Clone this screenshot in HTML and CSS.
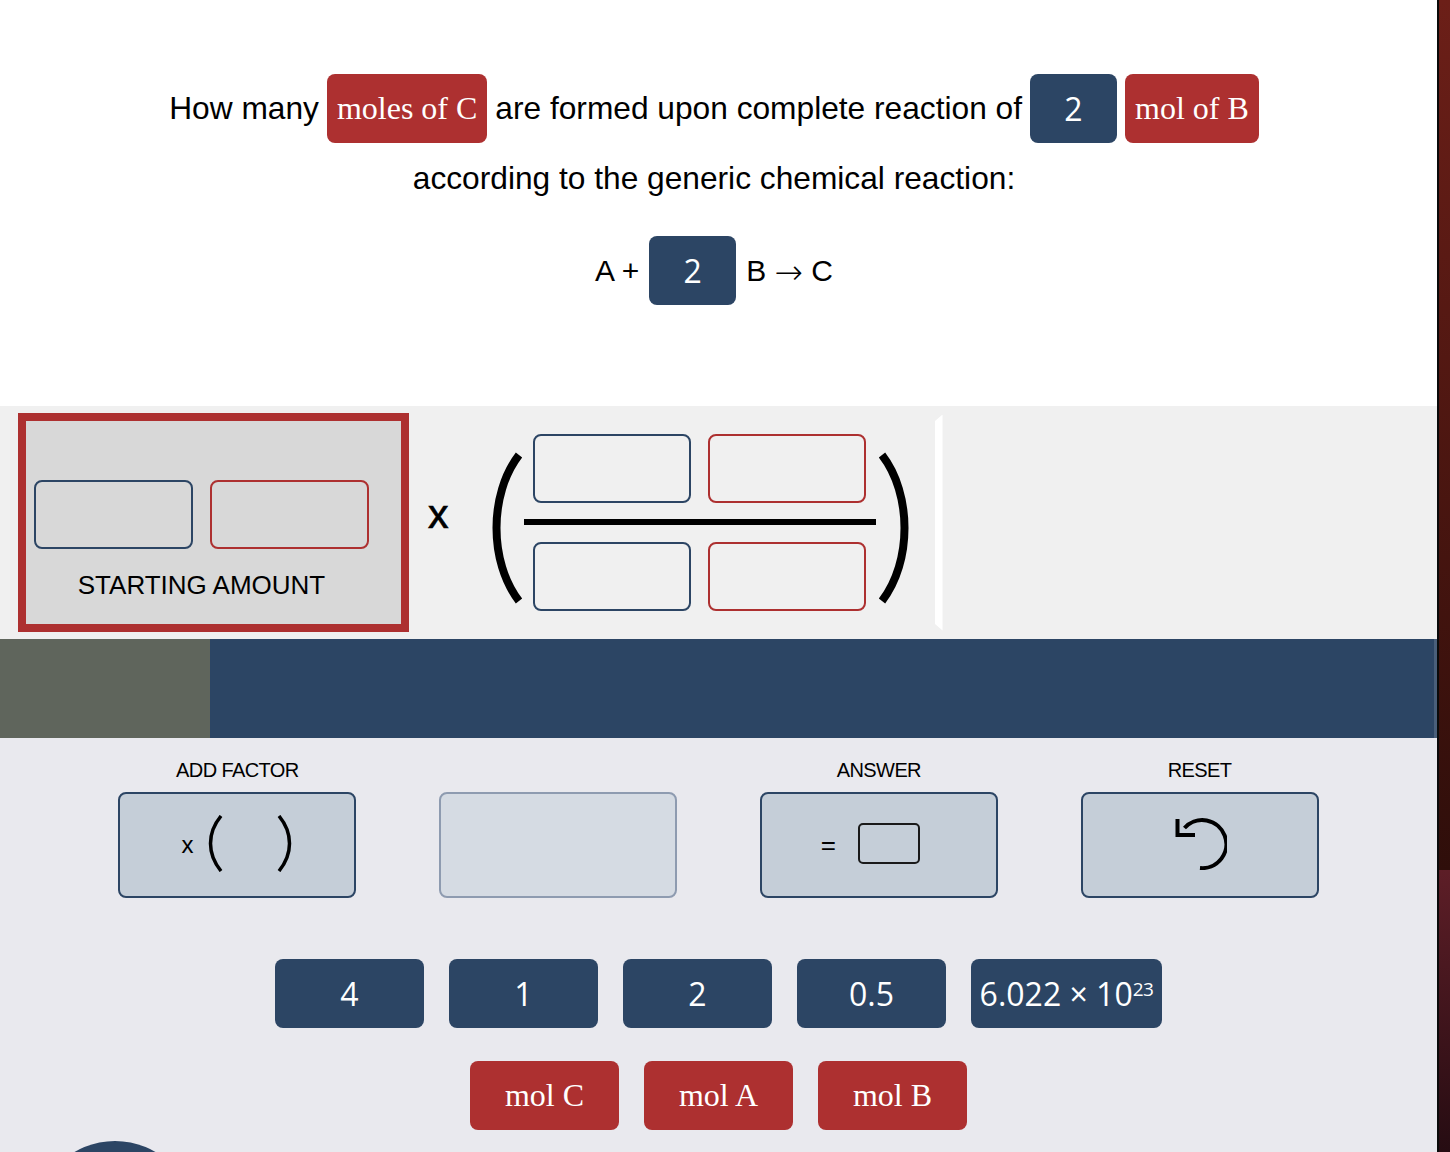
FILE: index.html
```html
<!DOCTYPE html>
<html>
<head>
<meta charset="utf-8">
<title>Dimensional analysis</title>
<link rel="stylesheet" href="styles.css">
</head>
<body>
<div class="page">
  <main class="app">
    <section class="question">
      <div class="q-line">
        <span>How many</span>
        <span class="chip chip-unit">moles of C</span>
        <span>are formed upon complete reaction of</span>
        <span class="chip chip-num">2</span>
        <span class="chip chip-unit">mol of B</span>
      </div>
      <div class="q-line2">according to the generic chemical reaction:</div>
      <div class="equation">
        <span>A +</span>
        <span class="chip chip-num">2</span>
        <span>B <span class="arrow">→</span> C</span>
      </div>
    </section>

    <section class="work">
      <div class="start-box">
        <div class="start-inner">
          <div class="slot-row">
            <div class="slot slot-num"></div>
            <div class="slot slot-unit"></div>
          </div>
          <div class="start-label">STARTING AMOUNT</div>
        </div>
      </div>
      <span class="times">x</span>
      <svg class="paren paren-left" viewBox="0 0 34 177" width="34" height="177">
        <path d="M29 21 C -1 60, -1 128, 29 167" fill="none" stroke="#000" stroke-width="8"/>
      </svg>
      <div class="fraction">
        <div class="slot-row">
          <div class="slot slot-num frac-slot"></div>
          <div class="slot slot-unit frac-slot"></div>
        </div>
        <div class="frac-line"></div>
        <div class="slot-row">
          <div class="slot slot-num frac-slot"></div>
          <div class="slot slot-unit frac-slot"></div>
        </div>
      </div>
      <svg class="paren paren-right" viewBox="0 0 36 177" width="36" height="177">
        <path d="M6 21 C 36 60, 36 128, 6 167" fill="none" stroke="#000" stroke-width="8"/>
      </svg>
      <div class="divider"></div>
    </section>

    <div class="band">
      <div class="band-left"></div>
      <div class="band-right"></div>
    </div>

    <section class="controls">
      <div class="tools">
        <div class="tool">
          <div class="tool-label">ADD FACTOR</div>
          <div class="tool-btn">
            <span class="factor-x">x</span>
            <svg class="factor-parens" viewBox="0 0 86 57" width="86" height="57">
              <path d="M14 1 C 0 18, 0 39, 14 56" fill="none" stroke="#000" stroke-width="3.5"/>
              <path d="M72 1 C 86 18, 86 39, 72 56" fill="none" stroke="#000" stroke-width="3.5"/>
            </svg>
          </div>
        </div>
        <div class="tool">
          <div class="tool-label"></div>
          <div class="tool-btn tool-btn-empty"></div>
        </div>
        <div class="tool">
          <div class="tool-label">ANSWER</div>
          <div class="tool-btn">
            <span class="equals">=</span>
            <span class="answer-box"></span>
          </div>
        </div>
        <div class="tool">
          <div class="tool-label">RESET</div>
          <div class="tool-btn">
            <svg class="reset-icon" viewBox="0 0 52 52" width="52" height="52">
              <path d="M9.5 10 A24 24 0 1 1 25 50" fill="none" stroke="#000" stroke-width="4"/>
              <path d="M2.5 1 V17 H20" fill="none" stroke="#000" stroke-width="4"/>
            </svg>
          </div>
        </div>
      </div>

      <div class="tiles tiles-num">
        <div class="tile tile-num">4</div>
        <div class="tile tile-num">1</div>
        <div class="tile tile-num">2</div>
        <div class="tile tile-num">0.5</div>
        <div class="tile tile-num tile-wide"><span>6.022 × 10<sup>23</sup></span></div>
      </div>
      <div class="tiles tiles-unit">
        <div class="tile tile-unit">mol C</div>
        <div class="tile tile-unit">mol A</div>
        <div class="tile tile-unit">mol B</div>
      </div>
    </section>
    <div class="fab"></div>
  </main>
  <div class="edge">
    <div class="edge-top"></div>
    <div class="edge-bottom"></div>
  </div>
</div>
</body>
</html>
```

FILE: styles.css
```css
* {
  box-sizing: border-box;
}

html,
body {
  margin: 0;
  padding: 0;
  width: 1450px;
  height: 1152px;
  overflow: hidden;
}

body {
  font-family: "Liberation Sans", Arial, sans-serif;
  color: #000;
  background: #fff;
}

.page {
  display: flex;
  width: 1450px;
  height: 1152px;
}

.app {
  width: 1437px;
  flex: none;
  display: flex;
  flex-direction: column;
  position: relative;
  overflow: hidden;
}

/* ---------- question ---------- */
.question {
  height: 406px;
  flex: none;
  background: #fff;
  padding: 74px 9px 0 0;
  display: flex;
  flex-direction: column;
  align-items: center;
}

.q-line {
  display: flex;
  align-items: center;
  gap: 8px;
  font-size: 31.7px;
  height: 69px;
  white-space: nowrap;
}

.chip {
  display: inline-flex;
  align-items: center;
  justify-content: center;
  height: 69px;
  border-radius: 8px;
  color: #fff;
}

.chip-unit {
  background: #ad3030;
  font-family: "Liberation Serif", "Times New Roman", serif;
  font-size: 32px;
  padding: 0 10px;
}

.chip-num {
  background: #2c4564;
  font-family: "Open Sans", sans-serif;
  font-size: 32px;
  width: 87px;
}

.q-line2 {
  font-size: 31.7px;
  line-height: 40px;
  margin-top: 15px;
}

.equation {
  display: flex;
  align-items: center;
  gap: 10px;
  font-size: 30px;
  line-height: 36px;
  margin-top: 38px;
  white-space: nowrap;
}

.arrow {
  font-family: "DejaVu Sans", sans-serif;
  font-size: 34px;
  font-weight: 300;
  line-height: 30px;
  position: relative;
  top: 3px;
}

/* ---------- work area ---------- */
.work {
  height: 233px;
  flex: none;
  background: #f0f0f0;
  display: flex;
  align-items: center;
}

.start-box {
  margin-left: 18px;
  width: 391px;
  height: 219px;
  flex: none;
  border: 8px solid #ad3030;
  background: #d8d8d8;
  padding: 59px 0 0 8px;
}

.start-inner {
  width: 335px;
  display: flex;
  flex-direction: column;
  align-items: center;
}

.slot-row {
  display: flex;
  gap: 17px;
}

.slot {
  width: 159px;
  height: 69px;
  border: 2px solid #2c4564;
  border-radius: 8px;
}

.slot-unit {
  border-color: #ad3030;
}

.frac-slot {
  width: 158px;
}

.start-label {
  margin-top: 21px;
  font-size: 26px;
  line-height: 30px;
  white-space: nowrap;
}

.times {
  font-size: 41px;
  line-height: 42px;
  -webkit-text-stroke: 0.7px #000;
  margin: 0 0 18px 19px;
}

.paren {
  flex: none;
  display: block;
}

.paren-left {
  margin-left: 41px;
}

.fraction {
  width: 352px;
  flex: none;
  display: flex;
  flex-direction: column;
  align-items: center;
}

.frac-line {
  width: 352px;
  height: 6px;
  background: #000;
  margin: 16px 0 17px;
}

.divider {
  width: 8px;
  height: 216px;
  flex: none;
  background: #fff;
  margin-left: 23px;
  clip-path: polygon(0 7px, 100% 0, 100% 100%, 0 calc(100% - 7px));
}

/* ---------- band ---------- */
.band {
  height: 99px;
  flex: none;
  display: flex;
}

.band-left {
  width: 210px;
  background: #5f655c;
}

.band-right {
  flex: 1;
  background: #2c4564;
  box-shadow: inset -3px 0 0 #4a5f7a;
}

/* ---------- controls ---------- */
.controls {
  flex: 1;
  background: #e9e9ee;
  padding-top: 20px;
}

.tools {
  width: 1283px;
  margin: 0 auto;
  display: grid;
  grid-template-columns: repeat(4, 1fr);
}

.tool {
  display: flex;
  flex-direction: column;
  align-items: center;
}

.tool-label {
  font-size: 20px;
  line-height: 24px;
  height: 24px;
  letter-spacing: -0.6px;
  margin-bottom: 10px;
  white-space: nowrap;
}

.tool-btn {
  width: 238px;
  height: 106px;
  border: 2px solid #2c4564;
  border-radius: 8px;
  background: #c5ced8;
  display: flex;
  align-items: center;
  justify-content: center;
}

.tool-btn-empty {
  background: #d5dbe3;
  border-color: #8e9bb0;
}

.factor-x {
  font-size: 24px;
  line-height: 24px;
}

.factor-parens {
  margin-left: 14px;
  margin-top: -4px;
}

.equals {
  font-size: 26px;
  line-height: 26px;
}

.answer-box {
  width: 62px;
  height: 41px;
  border: 2px solid #1a1a1a;
  border-radius: 5px;
  margin-left: 22px;
  margin-right: 17px;
  margin-bottom: 4px;
}

.reset-icon {
  margin-left: 3px;
  margin-top: -2px;
}

.tiles {
  display: flex;
  justify-content: center;
  gap: 25px;
}

.tiles-num {
  margin-top: 61px;
}

.tiles-unit {
  margin-top: 33px;
}

.tile {
  width: 149px;
  height: 69px;
  border-radius: 8px;
  color: #fff;
  display: flex;
  align-items: center;
  justify-content: center;
  white-space: nowrap;
}

.tile-num {
  background: #2c4564;
  font-family: "Open Sans", sans-serif;
  font-size: 32px;
}

.tile-wide {
  width: 191px;
}

.tile-wide sup {
  font-size: 19px;
  line-height: 0;
  vertical-align: 10px;
  letter-spacing: -0.5px;
}

.tile-unit {
  background: #ad3030;
  font-family: "Liberation Serif", "Times New Roman", serif;
  font-size: 32px;
}

.fab {
  position: absolute;
  left: 35px;
  top: 1141px;
  width: 160px;
  height: 160px;
  border-radius: 50%;
  background: #2c4564;
}

/* ---------- right edge ---------- */
.edge {
  width: 13px;
  flex: none;
  border-left: 2px solid #0a0a0a;
  display: flex;
  flex-direction: column;
}

.edge-top {
  height: 870px;
  background: linear-gradient(#6c1f18, #2f0e0a);
}

.edge-bottom {
  flex: 1;
  background: linear-gradient(#5d1e27, #260c12);
}
```
